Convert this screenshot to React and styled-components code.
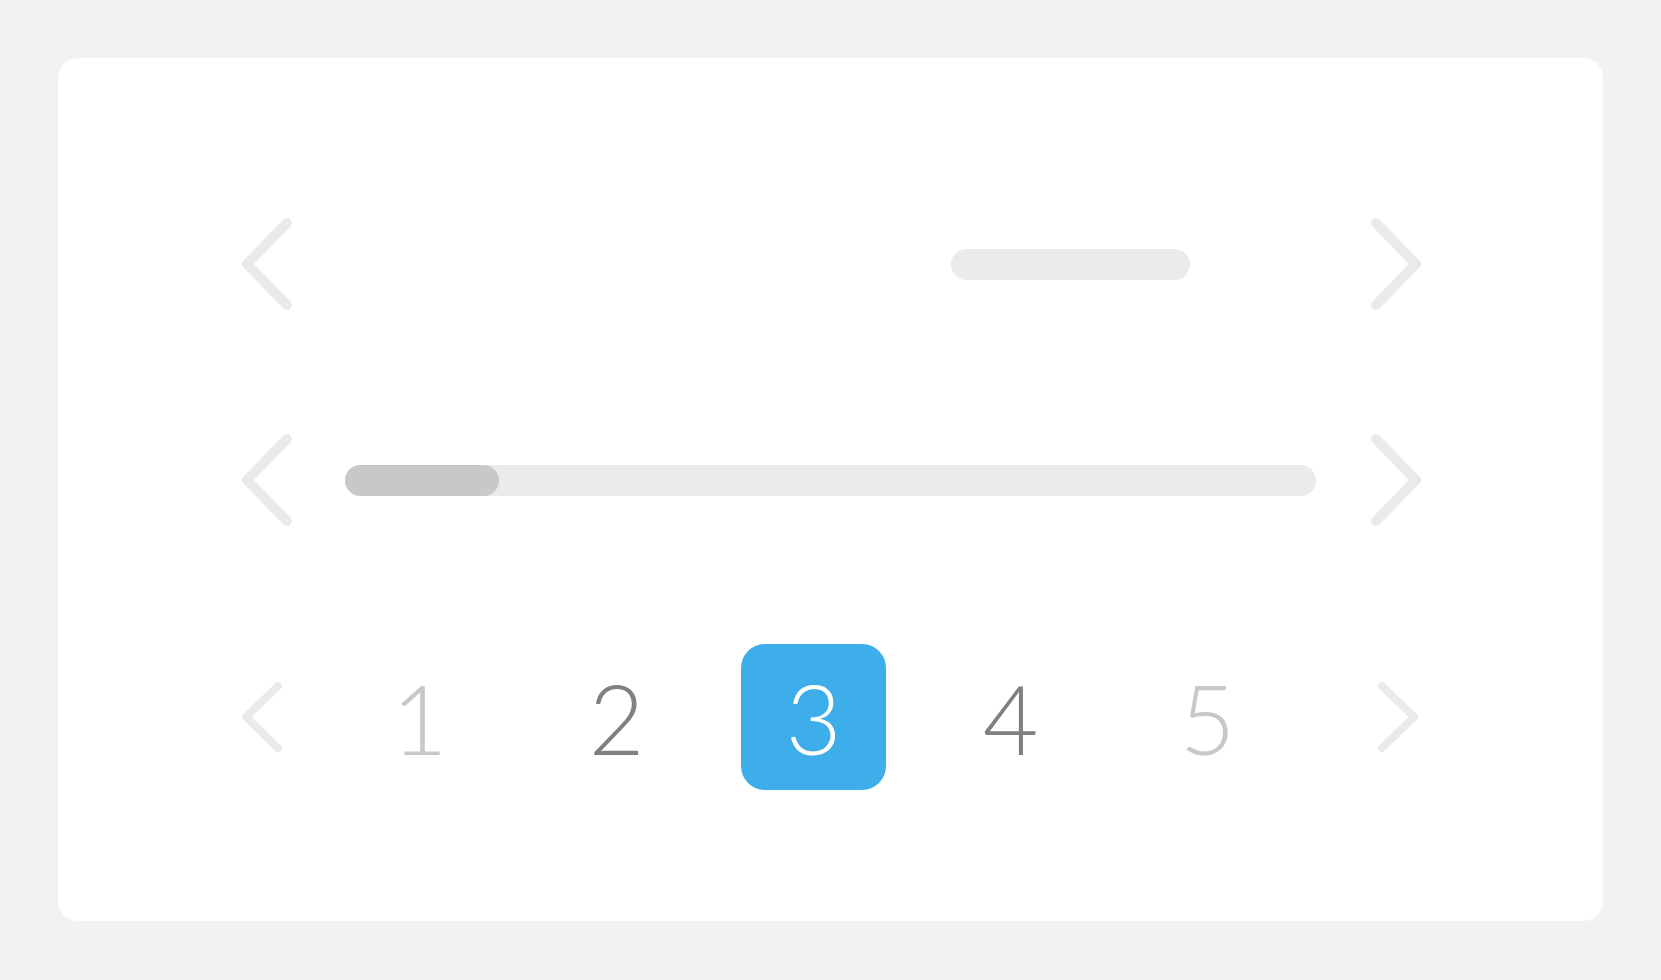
import React from 'react';
import styled, { createGlobalStyle } from 'styled-components';

const GlobalStyle = createGlobalStyle`
    html, body {
        margin: 0;
        padding: 0;
        background: #f2f2f2;
    }
    body {
        font-family: "Lato", "Open Sans", sans-serif;
    }
`;

const Chevron = ({ dir = 'left', big = true }) => {
    const w = big ? 50 : 40;
    const h = big ? 92 : 70;
    const s = big ? 10 : 8;
    const half = s / 2;
    const d = dir === 'left'
        ? `M${w - half} ${half} L${half} ${h / 2} L${w - half} ${h - half}`
        : `M${half} ${half} L${w - half} ${h / 2} L${half} ${h - half}`;
    return (
        <svg width={w} height={h} viewBox={`0 0 ${w} ${h}`}>
            <path d={d} fill="none" stroke="#eaeaea" strokeWidth={s} strokeLinecap="round" strokeLinejoin="round" />
        </svg>
    );
};

const App = () => {
    return (
        <>
            <GlobalStyle />
            <Page>
                <Card>
                    <Row>
                        <Chevron dir="left" />
                        <Track>
                            <Thumb start={62.4} size={24.6} />
                        </Track>
                        <Chevron dir="right" />
                    </Row>
                    <Row>
                        <Chevron dir="left" />
                        <Track filled>
                            <Thumb start={0} size={15.9} dark />
                        </Track>
                        <Chevron dir="right" />
                    </Row>
                    <Pager>
                        <Chevron dir="left" big={false} />
                        <Pages>
                            <PageItem tone="light">1</PageItem>
                            <PageItem tone="dark">2</PageItem>
                            <PageItem active>3</PageItem>
                            <PageItem tone="dark">4</PageItem>
                            <PageItem tone="light">5</PageItem>
                        </Pages>
                        <NextSlot>
                            <Chevron dir="right" big={false} />
                        </NextSlot>
                    </Pager>
                </Card>
            </Page>
        </>
    );
};

export default App;

const Page = styled.div`
    width: 100%;
    height: 980px;
    padding-top: 58px;
    box-sizing: border-box;
`;

const Card = styled.div`
    width: 1545px;
    height: 863px;
    margin: 0 auto;
    box-sizing: border-box;
    background: #ffffff;
    border-radius: 20px;
    padding: 160px 182px 0 184px;
    display: flex;
    flex-direction: column;
`;

const Row = styled.div`
    display: flex;
    align-items: center;
    height: 92px;
    margin-bottom: 124px;

    & + & {
        margin-bottom: 118px;
    }

    svg {
        flex-shrink: 0;
    }
`;

const Track = styled.div`
    flex: 1;
    height: 31px;
    margin: 0 55px 0 53px;
    border-radius: 16px;
    background: ${p => (p.filled ? '#ebebeb' : 'transparent')};
`;

const Thumb = styled.div`
    height: 100%;
    width: ${p => p.size}%;
    margin-left: ${p => p.start}%;
    border-radius: 16px;
    background: ${p => (p.dark ? '#c8c8c8' : '#ebebeb')};
`;

const Pager = styled.div`
    display: flex;
    align-items: center;
    height: 146px;
`;

const Pages = styled.div`
    display: flex;
    gap: 52px;
    margin-left: 65px;
`;

const PageItem = styled.div`
    width: 145px;
    height: 146px;
    border-radius: 24px;
    display: flex;
    align-items: center;
    justify-content: center;
    font-size: 96px;
    font-weight: 300;
    line-height: 1;
    padding-top: 2px;
    box-sizing: border-box;
    background: ${p => (p.active ? '#3daeea' : 'transparent')};
    color: ${p => (p.active ? '#ffffff' : p.tone === 'dark' ? '#808080' : '#c8c8c8')};
`;

const NextSlot = styled.div`
    margin-left: auto;
    margin-right: 3px;
    display: flex;
`;
